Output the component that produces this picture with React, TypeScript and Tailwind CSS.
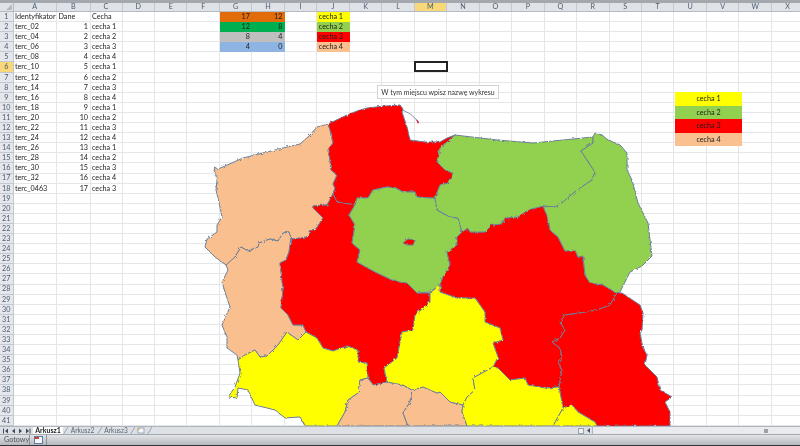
import React from 'react';

const columns = 'ABCDEFGHIJKLMNOPQRSTUVWX'.split('');
const rowNumbers = Array.from({ length: 41 }, (_, i) => i + 1);

const ids = ['02', '04', '06', '08', '10', '12', '14', '16', '18', '20', '22', '24', '26', '28', '30', '32', '0463'];
const traits = [1, 2, 3, 4, 1, 2, 3, 4, 1, 2, 3, 4, 1, 2, 3, 4, 3];

type Cell = { text: string; align?: 'right' | 'left'; bg?: string };

const cells: Record<string, Cell> = {
  A1: { text: 'Identyfikator' },
  B1: { text: 'Dane' },
  C1: { text: 'Cecha' },
  G1: { text: '17', align: 'right', bg: 'bg-[#e26b0a]' },
  H1: { text: '12', align: 'right', bg: 'bg-[#e26b0a]' },
  G2: { text: '12', align: 'right', bg: 'bg-[#00b050]' },
  H2: { text: '8', align: 'right', bg: 'bg-[#00b050]' },
  G3: { text: '8', align: 'right', bg: 'bg-[#bfbfbf]' },
  H3: { text: '4', align: 'right', bg: 'bg-[#bfbfbf]' },
  G4: { text: '4', align: 'right', bg: 'bg-[#8db4e2]' },
  H4: { text: '0', align: 'right', bg: 'bg-[#8db4e2]' },
  J1: { text: 'cecha 1', bg: 'bg-[#ffff00]' },
  J2: { text: 'cecha 2', bg: 'bg-[#92d050]' },
  J3: { text: 'cecha 3', bg: 'bg-[#ff0000]' },
  J4: { text: 'cecha 4', bg: 'bg-[#fac090]' },
};

ids.forEach((id, i) => {
  cells[`A${i + 2}`] = { text: `terc_${id}` };
  cells[`B${i + 2}`] = { text: String(i + 1), align: 'right' };
  cells[`C${i + 2}`] = { text: `cecha ${traits[i]}` };
});

const legend = [
  { label: 'cecha 1', bg: 'bg-[#ffff00]' },
  { label: 'cecha 2', bg: 'bg-[#92d050]' },
  { label: 'cecha 3', bg: 'bg-[#ff0000]' },
  { label: 'cecha 4', bg: 'bg-[#fac090]' },
];

const RED = '#ff0000';
const GREEN = '#92d050';
const YELLOW = '#ffff00';
const PEACH = '#fabf8f';

// voivodeship outlines, traced in page coordinates
const regions: { fill: string; d: string }[] = [
  {
    fill: PEACH,
    d: '328,124 317,127 310,135 300,144 287,147 263,153 243,158 225,166 218,169 214,167 217,180 216,190 218,198 220,207 222,217 217,225 217,232 207,239 205,247 215,257 226,265 232,265 235,257 241,247 248,251 258,247 259,243 270,239 278,241 283,233 289,232 291,238 293,239 307,237 312,230 316,229 323,218 313,208 313,206 327,205 333,194 335,188 333,184 337,175 331,170 330,160 328,150 333,143 330,130',
  },
  {
    fill: PEACH,
    d: '241,247 235,257 226,265 228,270 222,282 225,292 230,307 222,325 227,337 227,348 237,355 238,360 245,355 255,350 260,357 267,356 278,345 287,332 298,340 306,332 303,325 293,325 288,315 281,308 283,290 282,280 280,263 286,260 289,252 291,238 289,232 283,233 278,241 270,239 259,243 258,247 248,251',
  },
  {
    fill: RED,
    d: '328,124 347,115 357,111 367,108 385,106 400,105 403,109 402,112 407,127 410,140 425,142 440,142 447,138 455,135 440,148 437,162 445,170 453,173 448,183 440,185 435,198 430,198 417,197 415,192 403,192 396,188 387,187 373,190 368,198 357,198 355,205 337,202 333,194 335,188 333,184 337,175 331,170 330,160 328,150 333,143 330,130',
  },
  {
    fill: RED,
    d: '333,194 337,202 355,205 349,215 355,225 352,243 360,250 357,262 375,272 392,280 400,282 407,283 417,293 430,293 430,302 415,315 413,330 402,332 397,358 384,368 387,382 373,385 368,378 367,363 358,362 358,350 347,346 333,351 323,348 317,338 306,332 303,325 293,325 288,315 281,308 283,290 282,280 280,263 286,260 289,252 291,238 293,239 307,237 312,230 316,229 323,218 313,208 313,206 327,205',
  },
  {
    fill: GREEN,
    d: '355,205 357,198 368,198 373,190 387,187 396,188 403,192 415,192 417,197 430,198 435,198 437,210 450,217 458,218 462,232 457,237 457,245 447,252 450,265 443,277 440,285 430,292 417,293 407,283 400,282 392,280 375,272 357,262 360,250 352,243 355,225 349,215',
  },
  {
    fill: RED,
    d: '403,243 408,239 415,240 413,245 407,245',
  },
  {
    fill: RED,
    d: '462,232 468,228 470,232 485,232 492,225 502,224 505,218 518,217 528,210 543,206 548,218 550,230 558,237 565,251 575,250 578,257 583,256 585,275 590,283 603,285 615,292 617,293 610,305 597,310 580,313 565,315 560,322 565,330 560,338 552,342 560,348 562,357 558,362 562,370 559,387 545,388 528,385 525,378 510,380 498,368 493,367 498,357 493,343 503,340 500,328 485,322 485,312 475,298 457,298 440,292 440,285 443,277 450,265 447,252 457,245 457,237',
  },
  {
    fill: RED,
    d: '617,293 622,293 640,305 643,313 642,330 640,333 643,348 647,355 645,365 657,377 660,390 672,397 665,402 670,412 670,426 597,426 595,422 578,412 572,405 563,408 559,387 562,370 558,362 562,357 560,348 552,342 560,338 565,330 560,322 565,315 580,313 597,310 610,305',
  },
  {
    fill: GREEN,
    d: '455,135 497,140 533,143 593,137 593,143 581,151 587,160 595,172 592,180 577,190 563,202 555,207 543,206 528,210 518,217 505,218 502,224 492,225 485,232 470,232 468,228 462,232 458,218 450,217 437,210 435,198 440,185 448,183 453,173 445,170 437,162 440,148',
  },
  {
    fill: GREEN,
    d: '593,137 595,133 602,135 608,140 620,145 627,153 627,170 632,180 638,203 648,223 650,240 652,256 642,266 630,272 620,292 617,293 615,292 603,285 590,283 585,275 583,256 578,257 575,250 565,251 558,237 550,230 548,218 543,206 555,207 563,202 577,190 592,180 595,172 587,160 581,151 593,143',
  },
  {
    fill: YELLOW,
    d: '238,360 240,373 235,387 228,397 237,398 238,388 248,390 255,405 275,410 285,418 300,417 305,426 337,426 345,412 348,400 358,393 360,380 368,378 367,363 358,362 358,350 347,346 333,351 323,348 317,338 306,332 298,340 287,332 278,345 267,356 260,357 255,350 245,355',
  },
  {
    fill: PEACH,
    d: '337,426 345,412 348,400 358,393 360,380 368,378 373,385 387,382 403,385 412,390 410,402 403,413 408,426',
  },
  {
    fill: PEACH,
    d: '408,426 403,413 410,402 412,390 423,387 437,393 440,392 450,402 463,405 462,412 467,426',
  },
  {
    fill: YELLOW,
    d: '387,382 384,368 397,358 402,332 413,330 415,315 430,302 430,293 440,285 440,292 457,298 475,298 485,312 485,322 500,328 503,340 493,343 498,357 493,367 473,378 475,390 467,397 463,405 450,402 440,392 437,393 423,387 412,390 403,385',
  },
  {
    fill: YELLOW,
    d: '493,367 498,368 510,380 525,378 528,385 545,388 559,387 563,408 553,426 467,426 462,412 463,405 467,397 475,390 473,378',
  },
  {
    fill: YELLOW,
    d: '563,408 572,405 578,412 595,422 597,426 553,426',
  },
];

const PolandMap = () => (
  <svg className="absolute left-0 top-0 pointer-events-none" width="800" height="426" viewBox="0 0 800 426">
    <defs>
      <filter id="rough" x="0" y="0" width="800" height="426" filterUnits="userSpaceOnUse">
        <feTurbulence type="fractalNoise" baseFrequency="0.3" numOctaves="2" seed="4" />
        <feDisplacementMap in="SourceGraphic" scale="3" />
      </filter>
    </defs>
    <g filter="url(#rough)">
      {regions.map((r, i) => (
        <polygon key={i} points={r.d} fill={r.fill} stroke="#6b7f99" strokeWidth="1" strokeLinejoin="round" />
      ))}
    </g>
    <path d="M402 110 C408 112 414 116 418 122" fill="none" stroke="#5f7491" strokeWidth="0.8" />
    <path d="M416 119 L419 122 L418 124 Z" fill="#d8002a" />
  </svg>
);

const NavArrows = () => (
  <svg width="33" height="8" viewBox="0 0 33 8" className="shrink-0">
    <g fill="#3f4a5a">
      <rect x="3" y="1.5" width="1" height="5" />
      <path d="M8 1.5v5L5 4z" />
      <path d="M15 1.5v5L12 4z" />
      <path d="M19 1.5v5L22 4z" />
      <path d="M26 1.5v5L29 4z" />
      <rect x="29.5" y="1.5" width="1" height="5" />
    </g>
  </svg>
);

const TabSlant = () => (
  <svg width="5" height="8" viewBox="0 0 5 8" className="shrink-0">
    <path d="M0 8 L5 0" stroke="#8a94a3" strokeWidth="0.8" fill="none" />
  </svg>
);

export default function App() {
  return (
    <div className="relative w-[800px] h-[446px] overflow-hidden bg-white flex flex-col text-[7.2px] leading-none text-[#1c1c1c] font-['Lato','Liberation_Sans',sans-serif] blur-[0.3px]">
      <div className="h-[3px] shrink-0 bg-[#a3a8af]" />

      {/* column headers */}
      <div className="h-[9px] shrink-0 flex bg-[#dfe3e8] border-b border-[#b5bbc4] text-[#4d5b6e]">
        <div className="w-[13.5px] shrink-0 border-r border-[#b5bbc4] flex items-end justify-end">
          <div className="w-0 h-0 border-l-[6px] border-l-transparent border-b-[6px] border-b-[#b4bac2] mr-px mb-px" />
        </div>
        {columns.map((c, i) => (
          <div
            key={c}
            className={`shrink-0 flex items-center justify-center border-r border-[#c3c8d0] ${
              i === 0 ? 'w-[43.5px]' : i === 1 ? 'w-[33.5px]' : i === 2 ? 'w-[32px]' : 'w-[32.48px]'
            } ${c === 'M' ? 'bg-[#f8d878]' : ''}`}
          >
            {c}
          </div>
        ))}
      </div>

      {/* sheet */}
      <div className="flex-1 min-h-0 overflow-hidden">
        {rowNumbers.map((r) => (
          <div key={r} className="h-[10.1px] flex">
            <div
              className={`w-[13.5px] shrink-0 flex items-center justify-center border-r border-b border-[#c3c8d0] text-[#4d5b6e] ${
                r === 6 ? 'bg-[#f8d878]' : 'bg-[#e4e7eb]'
              }`}
            >
              {r}
            </div>
            {columns.map((c, i) => {
              const cell = cells[`${c}${r}`];
              return (
                <div
                  key={c}
                  className={`shrink-0 flex items-center px-[1.5px] border-r border-b whitespace-nowrap ${
                    i === 0 ? 'w-[43.5px]' : i === 1 ? 'w-[33.5px]' : i === 2 ? 'w-[32px]' : 'w-[32.48px]'
                  } ${cell?.align === 'right' ? 'justify-end' : ''} ${
                    cell?.bg ? `${cell.bg} border-transparent` : 'border-[#e4e6e9]'
                  }`}
                >
                  {cell?.text}
                </div>
              );
            })}
          </div>
        ))}
      </div>

      {/* sheet tabs and scroll bar */}
      <div className="h-[8px] shrink-0 flex items-center bg-[#dde1e6] border-t border-[#aeb4bc] text-[#5a6573] text-[6.6px]">
        <NavArrows />
        <div className="h-full flex items-center justify-center w-[30px] bg-white font-bold text-[7px] text-[#222]">Arkusz1</div>
        <TabSlant />
        <div className="w-[29px] text-center">Arkusz2</div>
        <TabSlant />
        <div className="w-[28px] text-center">Arkusz3</div>
        <TabSlant />
        <svg width="8" height="7" viewBox="0 0 8 7" className="shrink-0 ml-[2px]">
          <rect x="1" y="1" width="6" height="5" fill="#f4f6fa" stroke="#7d8ca0" strokeWidth="0.7" />
          <path d="M0 1.5h3v1H0z" fill="#e2a93a" />
        </svg>
        <div className="ml-[2px]">
          <TabSlant />
        </div>
        <div className="ml-[426px] w-[6px] h-[6px] bg-[#eef0f3] border border-[#9aa2ad]" />
        <svg width="7" height="7" viewBox="0 0 7 7" className="shrink-0 ml-px">
          <path d="M5 1v5L2 3.5z" fill="#4a5564" />
        </svg>
        <div className="flex-1 h-full bg-[#e9ebee] border-l border-[#aeb4bc] flex items-center">
          <div className="ml-[171px] w-[4px] h-[4px] bg-[#9aa0a8]" />
        </div>
      </div>

      {/* status bar */}
      <div className="h-[12px] shrink-0 flex items-center bg-gradient-to-b from-[#e3e5e8] to-[#b4b7bc] border-t border-[#a4a9b0] border-b border-b-[#33363b] text-[#50565f]">
        <div className="w-[30px] pl-1 border-r border-[#8f949b] h-full flex items-center">Gotowy</div>
        <div className="w-[17px] h-full flex items-center justify-center border-r border-[#8f949b]">
          <svg width="9" height="8" viewBox="0 0 9 8">
            <rect x="0.5" y="0.5" width="8" height="7" fill="#f5f7fb" stroke="#5f7ba3" />
            <rect x="1" y="1" width="4" height="2" fill="#d0402a" />
          </svg>
        </div>
      </div>

      {/* objects lying over the sheet */}
      <PolandMap />

      <div className="absolute left-[414px] top-[61px] w-[34px] h-[11px] border-2 border-[#222]">
        <div className="absolute -right-[2px] -bottom-[2px] w-[2px] h-[2px] bg-[#222]" />
      </div>

      <div className="absolute left-[377px] top-[85px] w-[122px] h-[14px] flex items-center justify-center whitespace-nowrap bg-white border border-[#d4d4d4] text-[7px] text-[#333]">
        W tym miejscu wpisz nazwę wykresu
      </div>

      <div className="absolute left-[675px] top-[92px] w-[67px] flex flex-col">
        {legend.map((l) => (
          <div key={l.label} className={`h-[13.5px] flex items-center justify-center ${l.bg}`}>
            {l.label}
          </div>
        ))}
      </div>
    </div>
  );
}
